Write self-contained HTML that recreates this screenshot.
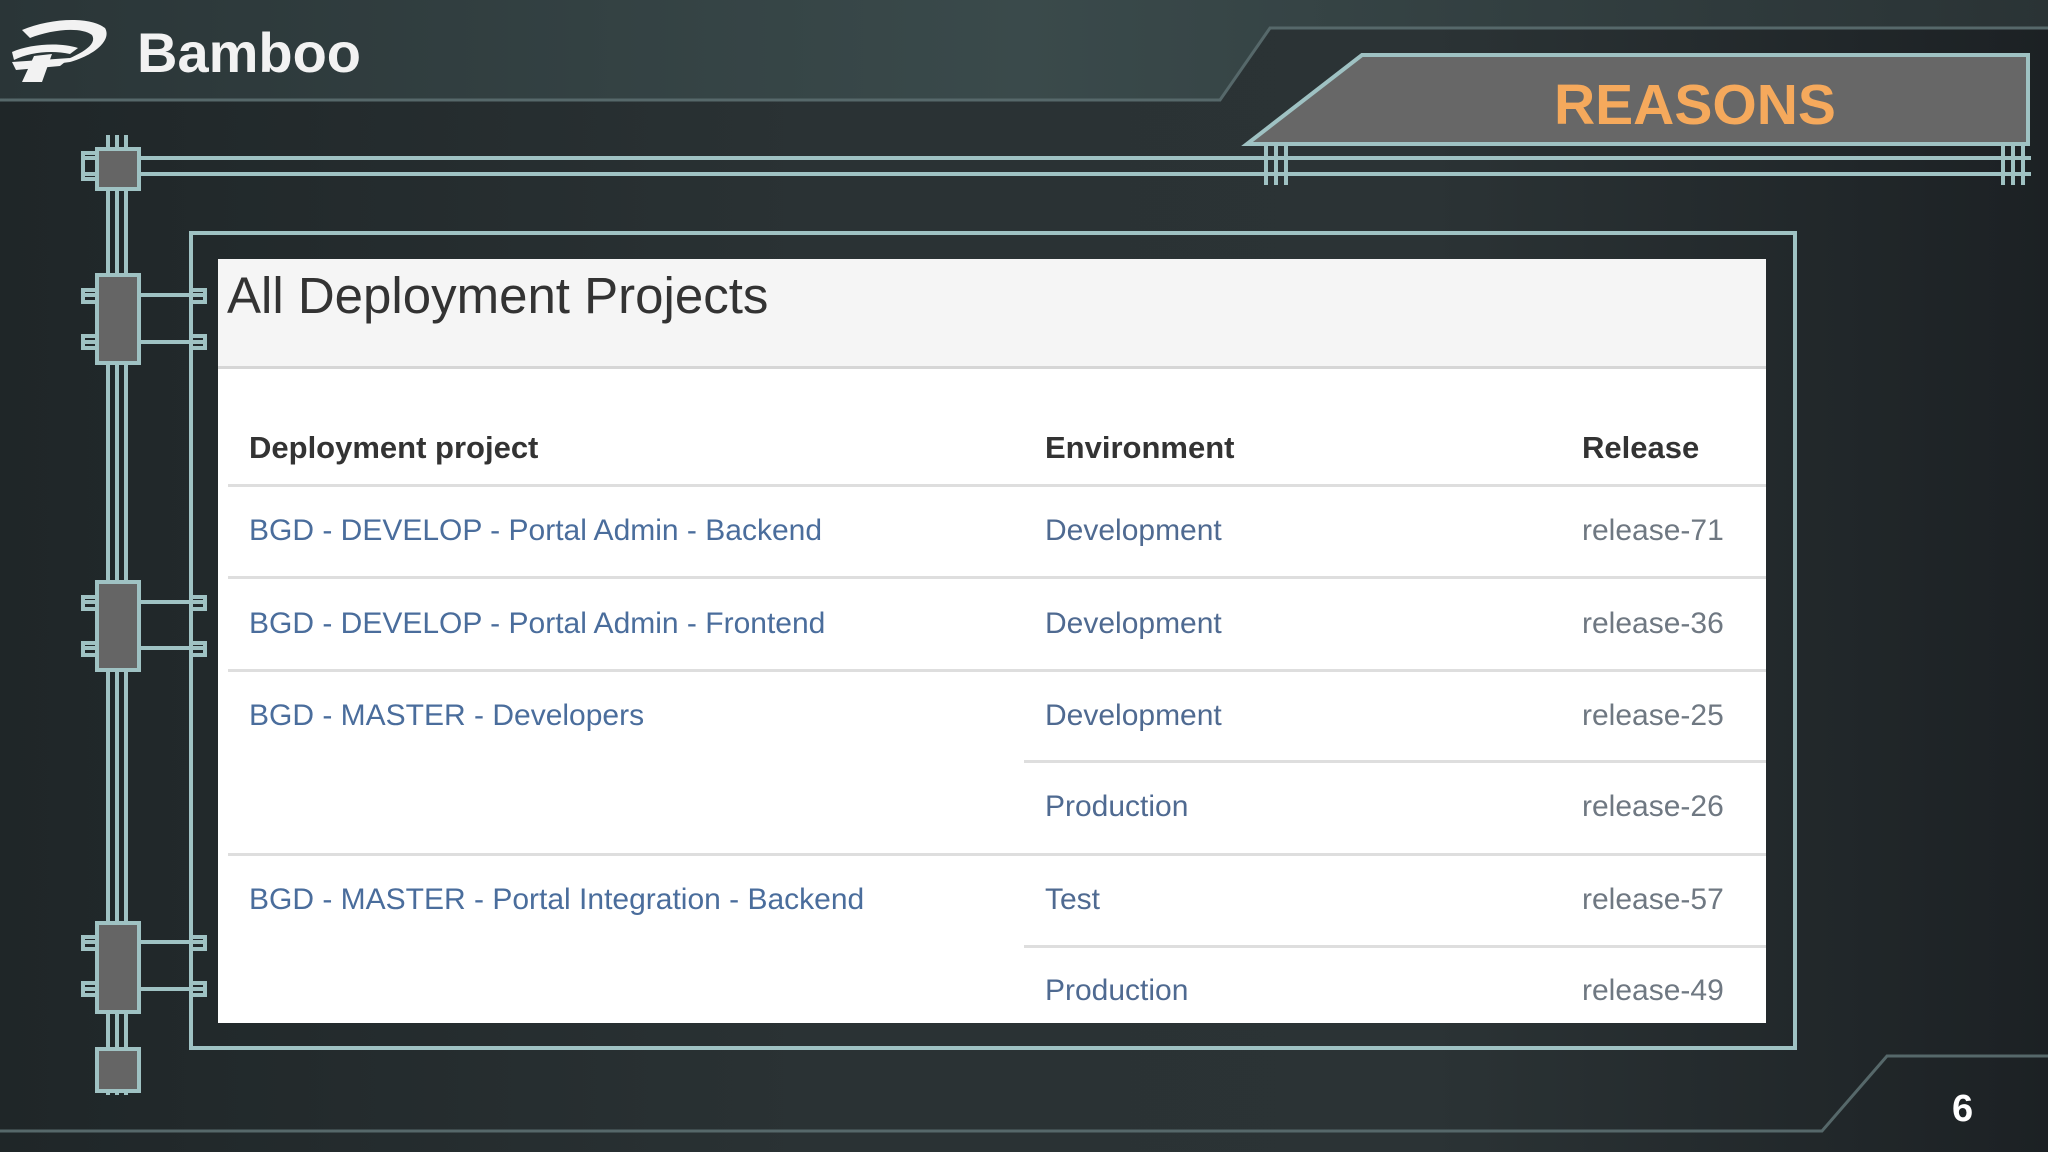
<!DOCTYPE html>
<html><head><meta charset="utf-8"><style>
html,body{margin:0;padding:0}
body{width:2048px;height:1152px;position:relative;overflow:hidden;font-family:"Liberation Sans",sans-serif;
background:linear-gradient(90deg,#1f2628 0%,#2a3234 40%,#2b3335 70%,#1c2124 100%);}
.abs{position:absolute;white-space:nowrap}
.panel{position:absolute;left:218px;top:259px;width:1548px;height:764px;background:#fff;overflow:hidden}
.phead{position:absolute;left:0;top:0;width:100%;height:107px;background:#f5f5f5;border-bottom:3px solid #d6d6d6}
.t{position:absolute;font-size:30px;white-space:nowrap;line-height:1}
.h{font-weight:bold;color:#333;font-size:31px}
.l{color:#4a6d9c}
.e{color:#4f6a91}
.r{color:#6f7882}
.line{position:absolute;height:3px;background:#dedede}
</style></head><body>
<svg width="2048" height="1152" style="position:absolute;left:0;top:0">
<defs><linearGradient id="hg" x1="0" y1="0" x2="1" y2="0"><stop offset="0" stop-color="#2a3537"/><stop offset="0.5" stop-color="#3a4a4b"/><stop offset="1" stop-color="#2a3335"/></linearGradient></defs>
<polygon points="0,0 2048,0 2048,28 1270,28 1220,100 0,100" fill="url(#hg)"/>
<polyline points="0,100 1220,100 1270,28 2048,28" fill="none" stroke="#56686a" stroke-width="3"/>
<polyline points="0,1131 1822,1131 1887,1056 2048,1056" fill="none" stroke="#56686a" stroke-width="3"/>
<g fill="none" stroke="#9fc2c3" stroke-width="4">
<line x1="81" y1="158" x2="2031" y2="158"/><line x1="81" y1="174" x2="2031" y2="174"/>
<line x1="108" y1="135" x2="108" y2="1095"/><line x1="117" y1="135" x2="117" y2="1095"/><line x1="126" y1="135" x2="126" y2="1095"/>
<line x1="81" y1="295" x2="206" y2="295"/><line x1="81" y1="342" x2="206" y2="342"/>
<line x1="81" y1="602" x2="206" y2="602"/><line x1="81" y1="648" x2="206" y2="648"/>
<line x1="81" y1="942" x2="206" y2="942"/><line x1="81" y1="989" x2="206" y2="989"/>
<rect x="83" y="153" width="15" height="26"/><rect x="83" y="290" width="15" height="12"/><rect x="83" y="336" width="15" height="12"/><rect x="83" y="597" width="15" height="12"/><rect x="83" y="643" width="15" height="12"/><rect x="83" y="937" width="15" height="12"/><rect x="83" y="983" width="15" height="12"/>
<rect x="191" y="290" width="14" height="12"/><rect x="191" y="336" width="14" height="12"/>
<rect x="191" y="597" width="14" height="12"/><rect x="191" y="643" width="14" height="12"/>
<rect x="191" y="937" width="14" height="12"/><rect x="191" y="983" width="14" height="12"/>
<line x1="1266" y1="146" x2="1266" y2="185"/><line x1="1276" y1="146" x2="1276" y2="185"/><line x1="1286" y1="146" x2="1286" y2="185"/>
<line x1="2003" y1="146" x2="2003" y2="185"/><line x1="2013" y1="146" x2="2013" y2="185"/><line x1="2023" y1="146" x2="2023" y2="185"/>
<rect x="191" y="233" width="1604" height="815"/>
</g>
<polygon points="1362,55 2028,55 2028,144 1247,144" fill="#676767" stroke="#9fc2c3" stroke-width="4"/>
<g fill="#656565" stroke="#9fc2c3" stroke-width="4">
<rect x="97" y="149" width="42" height="40"/><rect x="97" y="275" width="42" height="88"/><rect x="97" y="582" width="42" height="88"/><rect x="97" y="923" width="42" height="89"/><rect x="97" y="1049" width="42" height="42"/>
</g>
<g fill="#f2f2f2">
<path d="M22,30 C50,18 90,16 105,28 C112,40 95,55 70,62 L55,64 C80,55 98,45 92,35 C80,26 50,30 30,38 Z"/>
<path d="M12,52 C30,44 60,42 78,48 L70,54 C52,50 30,52 14,60 Z"/>
<path d="M34,56 L52,54 L42,82 L22,82 Z"/>
<path d="M12,62 L70,58 L60,66 L16,70 Z"/>
</g>
</svg>
<div class="abs" style="left:137px;top:20px;font-size:56px;font-weight:bold;color:#f2f2f2">Bamboo</div>
<div class="abs" style="left:1554px;top:72px;font-size:57px;font-weight:bold;color:#f5a95c">REASONS</div>
<div class="abs" style="left:1952px;top:1088px;font-size:38px;font-weight:bold;color:#fff">6</div>
<div class="panel">
<div class="phead"></div>
<div class="t" style="left:9px;top:6px;font-size:51px;color:#333;line-height:1.2">All Deployment Projects</div>
<div class="t h" style="left:31px;top:173px">Deployment project</div>
<div class="t h" style="left:827px;top:173px">Environment</div>
<div class="t h" style="left:1364px;top:173px">Release</div>
<div class="line" style="left:10px;right:0;top:225px"></div>
<div class="line" style="left:10px;right:0;top:317px"></div>
<div class="line" style="left:10px;right:0;top:410px"></div>
<div class="line" style="left:806px;right:0;top:501px"></div>
<div class="line" style="left:10px;right:0;top:594px"></div>
<div class="line" style="left:806px;right:0;top:686px"></div>
<div class="t l" style="left:31px;top:257px">BGD - DEVELOP - Portal Admin - Backend</div>
<div class="t e" style="left:827px;top:257px">Development</div>
<div class="t r" style="left:1364px;top:257px">release-71</div>
<div class="t l" style="left:31px;top:350px">BGD - DEVELOP - Portal Admin - Frontend</div>
<div class="t e" style="left:827px;top:350px">Development</div>
<div class="t r" style="left:1364px;top:350px">release-36</div>
<div class="t l" style="left:31px;top:442px">BGD - MASTER - Developers</div>
<div class="t e" style="left:827px;top:442px">Development</div>
<div class="t r" style="left:1364px;top:442px">release-25</div>
<div class="t e" style="left:827px;top:533px">Production</div>
<div class="t r" style="left:1364px;top:533px">release-26</div>
<div class="t l" style="left:31px;top:626px">BGD - MASTER - Portal Integration - Backend</div>
<div class="t e" style="left:827px;top:626px">Test</div>
<div class="t r" style="left:1364px;top:626px">release-57</div>
<div class="t e" style="left:827px;top:717px">Production</div>
<div class="t r" style="left:1364px;top:717px">release-49</div>
</div>
</body></html>
